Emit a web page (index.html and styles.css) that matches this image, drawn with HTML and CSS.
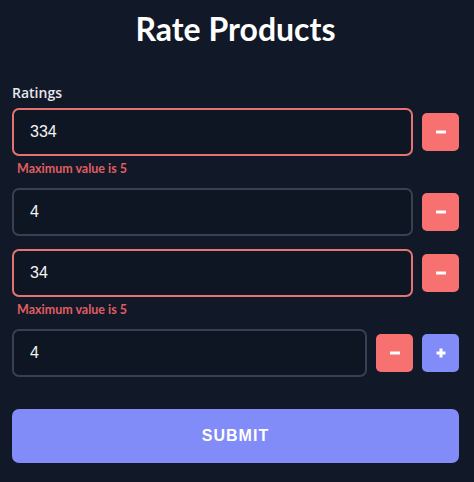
FILE: index.html
```html
<!DOCTYPE html>
<html lang="en">
<head>
<meta charset="utf-8">
<title>Rate Products</title>
<link rel="stylesheet" href="styles.css">
</head>
<body>
<main class="page">
  <h1 class="title">Rate Products</h1>
  <form class="form">
    <label class="label">Ratings</label>
    <div class="field">
      <div class="row">
        <input class="input input-error" type="text" value="334">
        <button type="button" class="btn btn-remove" aria-label="Remove"><svg width="12" height="12" viewBox="0 0 12 12"><path d="M1 6h10" stroke="#fff" stroke-width="3"/></svg></button>
      </div>
      <p class="error">Maximum value is 5</p>
    </div>
    <div class="field">
      <div class="row">
        <input class="input" type="text" value="4">
        <button type="button" class="btn btn-remove" aria-label="Remove"><svg width="12" height="12" viewBox="0 0 12 12"><path d="M1 6h10" stroke="#fff" stroke-width="3"/></svg></button>
      </div>
    </div>
    <div class="field">
      <div class="row">
        <input class="input input-error" type="text" value="34">
        <button type="button" class="btn btn-remove" aria-label="Remove"><svg width="12" height="12" viewBox="0 0 12 12"><path d="M1 6h10" stroke="#fff" stroke-width="3"/></svg></button>
      </div>
      <p class="error">Maximum value is 5</p>
    </div>
    <div class="field">
      <div class="row">
        <input class="input" type="text" value="4">
        <button type="button" class="btn btn-remove" aria-label="Remove"><svg width="12" height="12" viewBox="0 0 12 12"><path d="M1 6h10" stroke="#fff" stroke-width="3"/></svg></button>
        <button type="button" class="btn btn-add" aria-label="Add"><svg width="12" height="12" viewBox="0 0 12 12"><path d="M1.5 6h9M6 1.5v9" stroke="#fff" stroke-width="3"/></svg></button>
      </div>
    </div>
    <button type="submit" class="submit">SUBMIT</button>
  </form>
</main>
</body>
</html>
```

FILE: styles.css
```css
* { box-sizing: border-box; }
html, body {
  margin: 0;
  background: #111827;
}
body {
  font-family: "Open Sans", "Noto Sans", sans-serif;
  color: #f3f4f6;
}
.page {
  padding: 8px 15px 0 12px;
}
.title {
  margin: 0;
  text-align: center;
  font-family: "Lato", "Open Sans", sans-serif;
  font-weight: 700;
  font-size: 32px;
  line-height: 42px;
  color: #ffffff;
}
.form {
  display: flex;
  flex-direction: column;
  margin-top: 34px;
}
.label {
  font-size: 14px;
  font-weight: 600;
  line-height: 18px;
  color: #e5e7eb;
  margin-bottom: 6px;
}
.field {
  margin-bottom: 13px;
}
.row {
  display: flex;
  align-items: center;
  gap: 9px;
}
.input {
  flex: 1;
  min-width: 0;
  height: 48px;
  padding: 0 16px;
  background: #0f1623;
  border: 2px solid #374151;
  border-radius: 7px;
  color: #f3f4f6;
  font-family: "Liberation Sans", Arial, sans-serif;
  font-size: 16px;
  outline: none;
}
.input-error {
  border-color: #e57373;
}
.btn {
  width: 37px;
  height: 38px;
  flex: none;
  border: none;
  border-radius: 5px;
  padding: 0;
  display: flex;
  align-items: center;
  justify-content: center;
  cursor: pointer;
}
.btn-remove { background: #f87171; }
.btn-add { background: #818cf8; }
.error {
  margin: 6px 0 0 5px;
  font-family: "Lato", "Open Sans", sans-serif;
  font-size: 12.5px;
  font-weight: 700;
  line-height: 13px;
  color: #e05d63;
}
.submit {
  margin-top: 19px;
  height: 54px;
  border: none;
  border-radius: 7px;
  background: #818cf8;
  color: #ffffff;
  font-family: "Liberation Sans", Arial, sans-serif;
  font-weight: 700;
  font-size: 16px;
  letter-spacing: 1px;
  cursor: pointer;
}
```
